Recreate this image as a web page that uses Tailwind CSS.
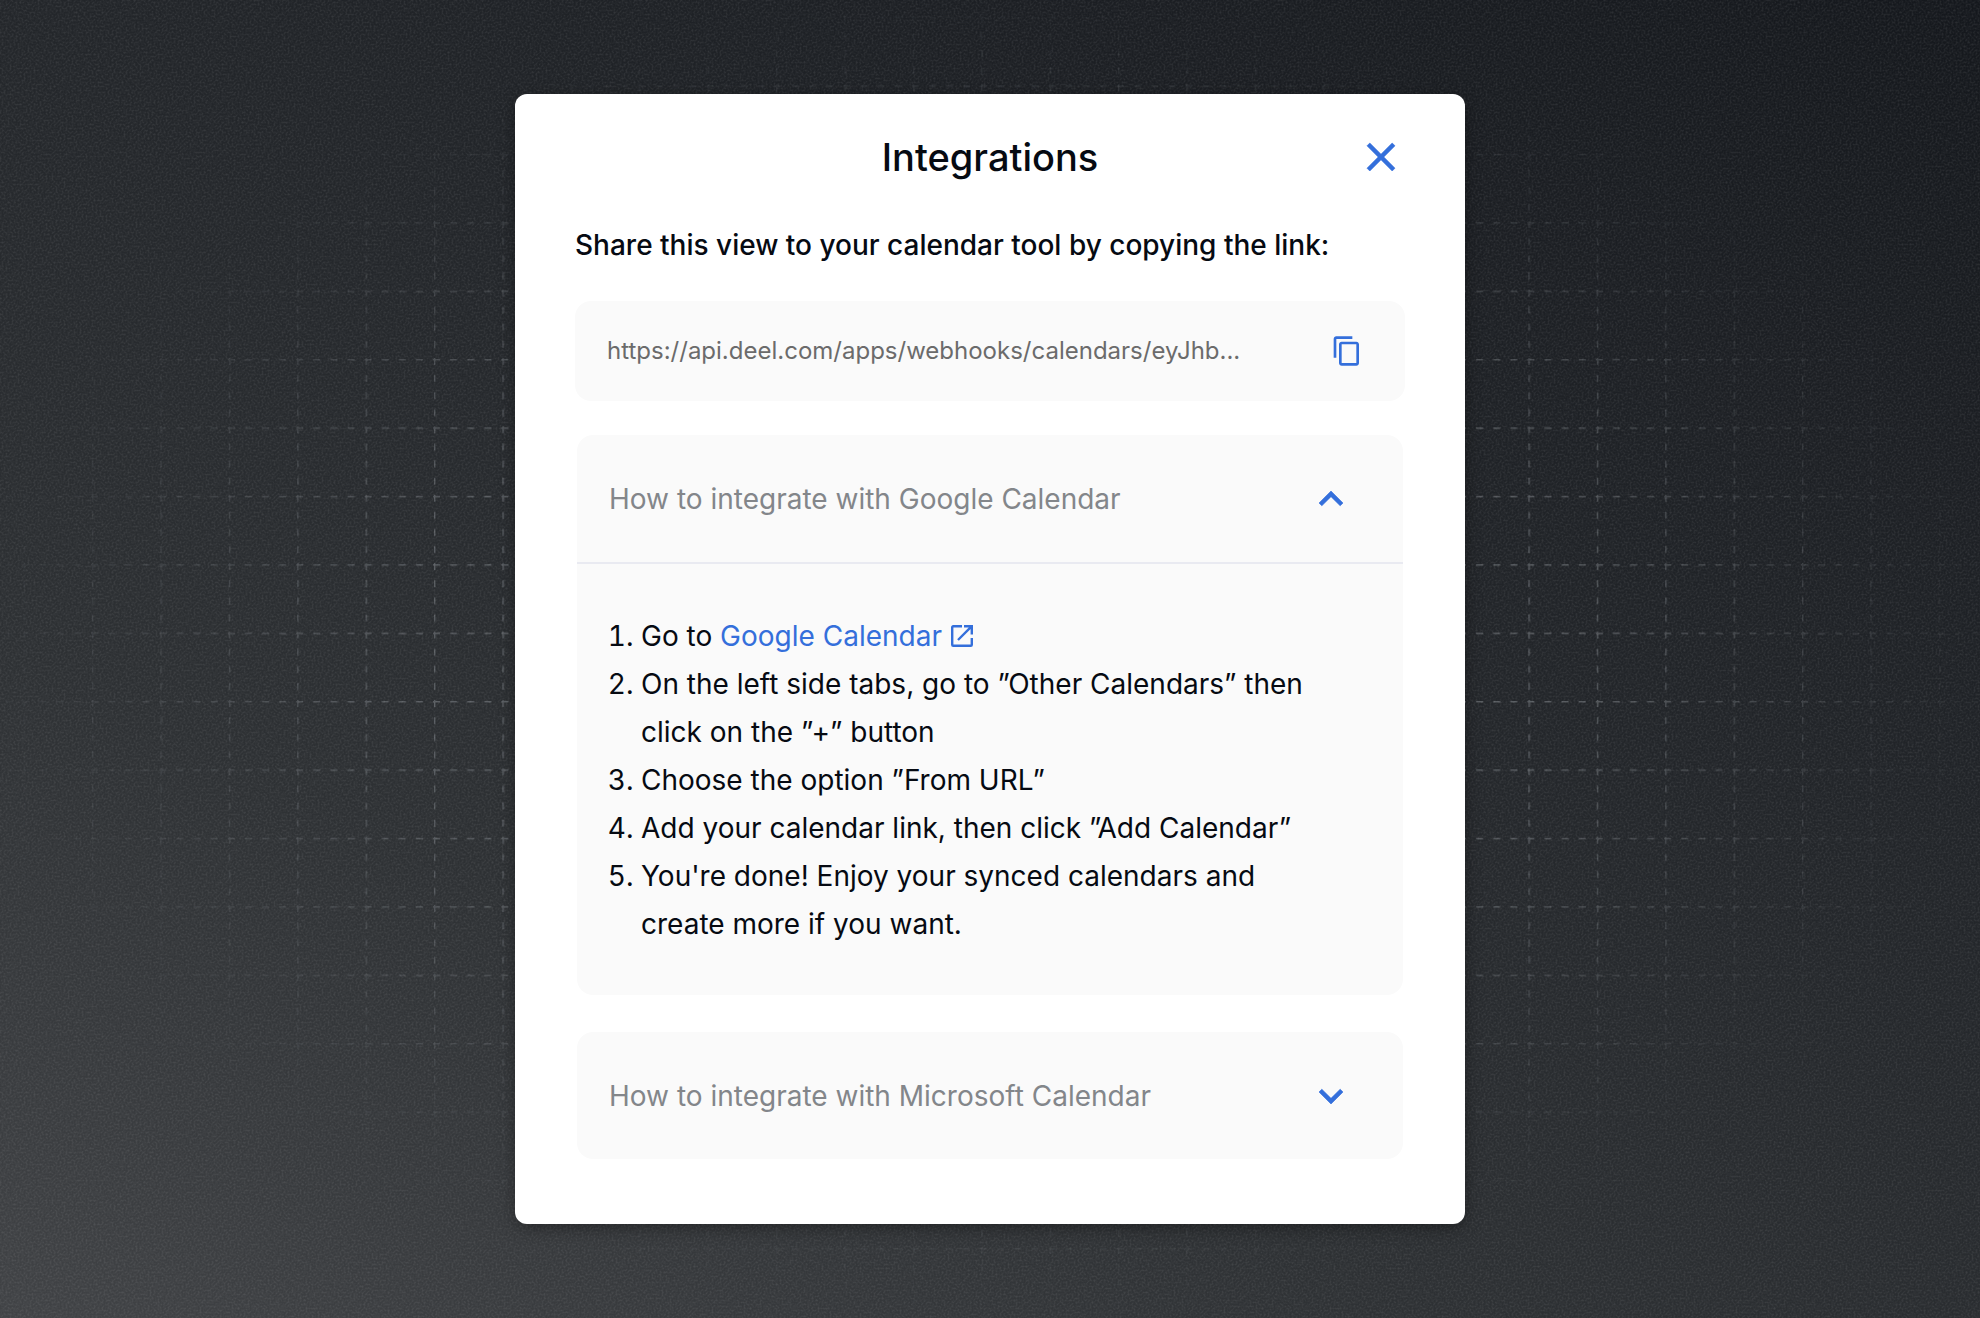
<!DOCTYPE html>
<html lang="en">
<head>
  <meta charset="UTF-8" />
  <meta name="viewport" content="width=device-width, initial-scale=1.0" />
  <title>Integrations</title>
  <script src="https://cdn.jsdelivr.net/npm/@tailwindcss/browser@4"></script>
</head>
<body class="relative min-h-screen overflow-x-hidden bg-[linear-gradient(205deg,#15181d_0%,#23262a_40%,#2e3134_70%,#414346_100%)] font-['Inter',sans-serif] text-[#060a12]">

  <!-- dashed grid, fades out towards the edges, with a light grain over it -->
  <svg class="absolute inset-0 h-full w-full" aria-hidden="true">
    <defs>
      <pattern id="grid" x="92" y="17" width="68.4" height="68.4" patternUnits="userSpaceOnUse">
        <path d="M0 .7H68.4M.7 0V68.4" fill="none" stroke="#63676c" stroke-width="1.4" stroke-dasharray="7 10.1" stroke-dashoffset="1" />
      </pattern>
      <radialGradient id="fade" cx=".5" cy=".5" r=".5">
        <stop offset="0" stop-color="#fff" />
        <stop offset=".55" stop-color="#fff" stop-opacity=".8" />
        <stop offset="1" stop-color="#fff" stop-opacity="0" />
      </radialGradient>
      <mask id="gridMask"><ellipse cx="50%" cy="50%" rx="53%" ry="51%" fill="url(#fade)" /></mask>
      <filter id="grain" x="0" y="0" width="100%" height="100%">
        <feTurbulence type="fractalNoise" baseFrequency=".5" numOctaves="2" />
        <feColorMatrix values="0 0 0 0 1  0 0 0 0 1  0 0 0 0 1  .2 0 0 0 -.08" />
      </filter>
    </defs>
    <rect width="100%" height="100%" fill="url(#grid)" mask="url(#gridMask)" />
    <rect width="100%" height="100%" filter="url(#grain)" />
  </svg>

  <div class="relative flex min-h-screen items-center justify-center p-6">
    <div role="dialog" aria-labelledby="title" class="w-full max-w-[950px] rounded-xl bg-white px-[60px] pt-9 pb-[65px] shadow-[0_4px_16px_rgba(0,0,0,0.35)]">
      <header class="grid grid-cols-[48px_1fr_48px] items-center">
        <h1 id="title" class="col-start-2 text-center text-[38px] leading-[54px] font-medium">Integrations</h1>
        <button type="button" aria-label="Close" class="text-[#346fdb]">
          <svg class="h-12 w-12" viewBox="0 0 24 24" fill="currentColor" stroke="currentColor" stroke-width=".3"><path d="M19 6.41L17.59 5 12 10.59 6.41 5 5 6.41 10.59 12 5 17.59 6.41 19 12 13.41 17.59 19 19 17.59 13.41 12z" /></svg>
        </button>
      </header>

      <p class="mt-9 text-[28px] leading-[50px] font-medium">Share this view to your calendar tool by copying the link:</p>

      <div class="mt-[31px] flex h-[100px] items-center justify-between rounded-2xl bg-[#fafafa] pr-[42px] pl-8">
        <span class="truncate text-2xl text-[#6b6b6b]">https://api.deel.com/apps/webhooks/calendars/eyJhb...</span>
        <button type="button" aria-label="Copy link" class="text-[#346fdb]">
          <svg class="h-8 w-8" viewBox="0 0 24 24" fill="currentColor"><path d="M16 1H4c-1.1 0-2 .9-2 2v14h2V3h12V1zm3 4H8c-1.1 0-2 .9-2 2v14c0 1.1.9 2 2 2h11c1.1 0 2-.9 2-2V7c0-1.1-.9-2-2-2zm0 16H8V7h11v14z" /></svg>
        </button>
      </div>

      <section class="mx-0.5 mt-[34px] rounded-2xl bg-[#fafafa]">
        <button type="button" aria-expanded="true" aria-controls="googleSteps" class="flex h-[129px] w-full items-center justify-between border-b-2 border-[#e9eaf1] pr-12 pl-8 text-left text-[28px] text-[#83868a]">
          How to integrate with Google Calendar
          <svg class="h-12 w-12 text-[#346fdb]" viewBox="0 0 24 24" fill="currentColor" stroke="currentColor" stroke-width=".3"><path d="M12 8l-6 6 1.41 1.41L12 10.83l4.59 4.58L18 14z" /></svg>
        </button>
        <div id="googleSteps" class="pt-12 pr-16 pb-[47px] pl-8">
          <ol class="list-decimal pl-8 text-[28px] leading-[48px]">
            <li>Go to <a href="https://calendar.google.com" class="text-[#346fdb]">Google Calendar<svg class="ml-2 inline h-6 w-6 align-[-2px]" viewBox="0 0 24 24" fill="none" stroke="currentColor" stroke-width="2.4"><path d="M12 2.2H3.2a1 1 0 0 0-1 1v17.6a1 1 0 0 0 1 1h17.6a1 1 0 0 0 1-1V14M14 2.2h7.8v8.3M21.8 2.2L8 16" /></svg></a></li>
            <li>On the left side tabs, go to ”Other Calendars” then click on the ”+” button</li>
            <li>Choose the option ”From URL”</li>
            <li>Add your calendar link, then click ”Add Calendar”</li>
            <li>You're done! Enjoy your synced calendars and create more if you want.</li>
          </ol>
        </div>
      </section>

      <section class="mx-0.5 mt-[37px] rounded-2xl bg-[#fafafa]">
        <button type="button" aria-expanded="false" class="flex h-[127px] w-full items-center justify-between pr-12 pl-8 text-left text-[28px] text-[#83868a]">
          How to integrate with Microsoft Calendar
          <svg class="h-12 w-12 text-[#346fdb]" viewBox="0 0 24 24" fill="currentColor" stroke="currentColor" stroke-width=".3"><path d="M16.59 8.59L12 13.17 7.41 8.59 6 10l6 6 6-6z" /></svg>
        </button>
      </section>
    </div>
  </div>
</body>
</html>
